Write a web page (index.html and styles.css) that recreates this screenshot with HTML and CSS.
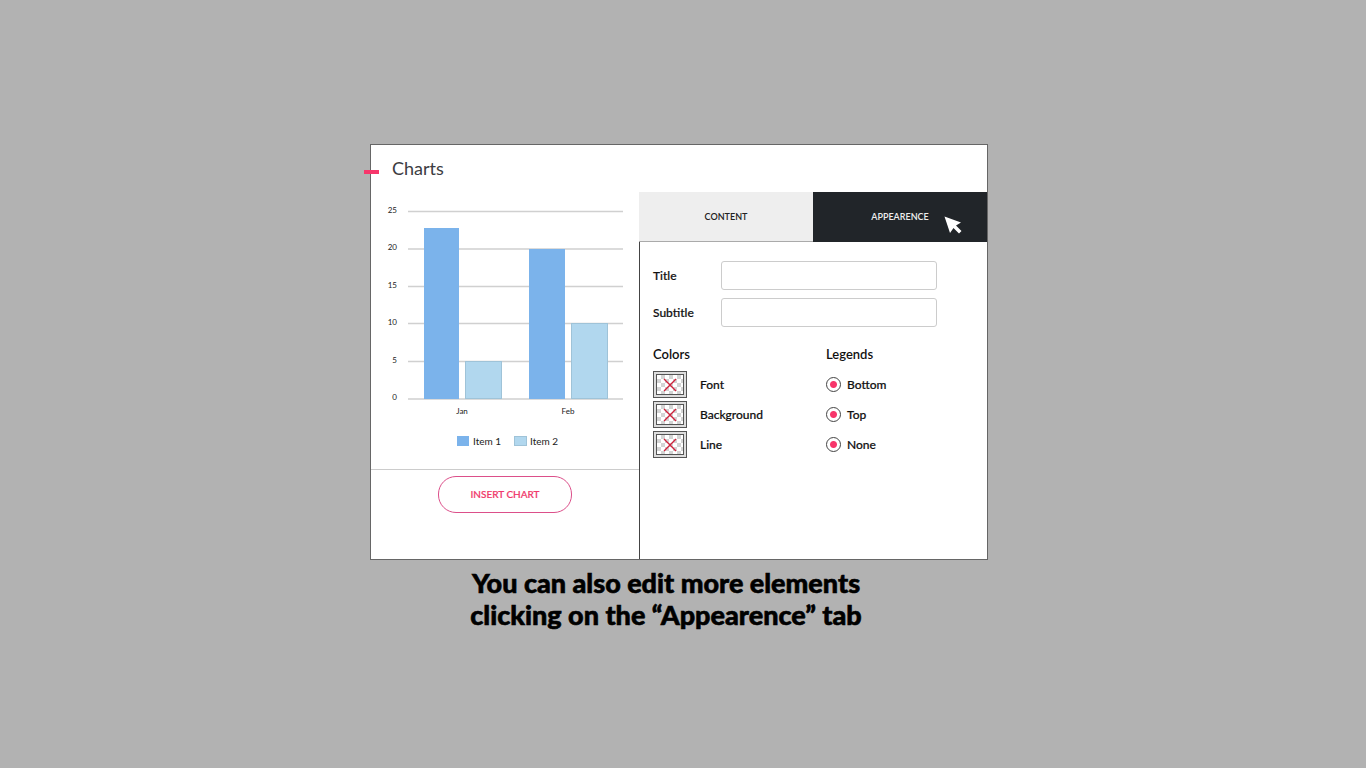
FILE: index.html
```
<!DOCTYPE html>
<html lang="en">

<head>
    <meta charset="UTF-8">
    <meta name="viewport" content="width=device-width, initial-scale=1.0">
    <title>Charts</title>
    <link rel="stylesheet" href="styles.css">
</head>

<body>
    <main class="page">
        <section class="dialog">
            <span class="marker"></span>
            <h1 class="dialog-title">Charts</h1>
            <div class="columns">
                <div class="preview">
                    <svg class="chart" viewBox="0 0 268 277" role="img" aria-label="Item 1 and Item 2 by month">
                        <g class="grid-lines">
                            <path d="M37 19.5H252M37 57H252M37 94.5H252M37 131.5H252M37 169.5H252M37 207H252" />
                        </g>
                        <g class="scale">
                            <text x="26" y="21">25</text>
                            <text x="26" y="58">20</text>
                            <text x="26" y="96">15</text>
                            <text x="26" y="133">10</text>
                            <text x="26" y="171">5</text>
                            <text x="26" y="208">0</text>
                        </g>
                        <g class="item1">
                            <rect x="53" y="36" width="35" height="171" />
                            <rect x="158" y="57" width="36" height="150" />
                            <rect x="86" y="244" width="12" height="10" />
                        </g>
                        <g class="item2">
                            <rect x="94.5" y="169.5" width="36" height="37" />
                            <rect x="200.5" y="131.5" width="36" height="75" />
                            <rect x="143.5" y="244.5" width="12" height="9" />
                        </g>
                        <g class="months">
                            <text x="91" y="222">Jan</text>
                            <text x="197" y="222">Feb</text>
                        </g>
                        <g class="legend">
                            <text x="102" y="253">Item 1</text>
                            <text x="159" y="253">Item 2</text>
                        </g>
                    </svg>
                    <div class="actions">
                        <button type="button" class="insert-btn">INSERT CHART</button>
                    </div>
                </div>
                <div class="settings">
                    <div class="tabs">
                        <button type="button" class="tab">CONTENT</button>
                        <button type="button" class="tab active">APPEARENCE
                            <svg class="cursor" viewBox="0 0 18 18" aria-hidden="true">
                                <path d="M0.5 0.5L17 6.5L12 9.5L17.5 15L15 17.5L9.5 12L6 17Z" />
                            </svg>
                        </button>
                    </div>
                    <form class="options" action="#">
                        <div class="field">
                            <label for="title">Title</label>
                            <input type="text" id="title" autocomplete="off">
                        </div>
                        <div class="field">
                            <label for="subtitle">Subtitle</label>
                            <input type="text" id="subtitle" autocomplete="off">
                        </div>
                        <div class="groups">
                            <div class="group">
                                <h2>Colors</h2>
                                <div class="row">
                                    <button type="button" class="swatch" id="font" aria-labelledby="font-label"><svg viewBox="0 0 14 14"><path d="M1 1L13 13M13 1L1 13" /></svg></button>
                                    <label for="font" id="font-label">Font</label>
                                </div>
                                <div class="row">
                                    <button type="button" class="swatch" id="background" aria-labelledby="background-label"><svg viewBox="0 0 14 14"><path d="M1 1L13 13M13 1L1 13" /></svg></button>
                                    <label for="background" id="background-label">Background</label>
                                </div>
                                <div class="row">
                                    <button type="button" class="swatch" id="line" aria-labelledby="line-label"><svg viewBox="0 0 14 14"><path d="M1 1L13 13M13 1L1 13" /></svg></button>
                                    <label for="line" id="line-label">Line</label>
                                </div>
                            </div>
                            <div class="group">
                                <h2>Legends</h2>
                                <div class="row radio-row">
                                    <input type="radio" name="legends" id="bottom" checked>
                                    <label for="bottom">Bottom</label>
                                </div>
                                <div class="row radio-row">
                                    <input type="radio" name="legends" id="top">
                                    <label for="top">Top</label>
                                </div>
                                <div class="row radio-row">
                                    <input type="radio" name="legends" id="none">
                                    <label for="none">None</label>
                                </div>
                            </div>
                        </div>
                    </form>
                </div>
            </div>
        </section>
        <p class="caption">You can also edit more elements<br>clicking on the “Appearence” tab</p>
    </main>
</body>

</html>
```
FILE: styles.css
```
* {
    margin: 0;
    padding: 0;
    box-sizing: border-box;
}

body {
    background: #b2b2b2;
    color: #111;
    font-family: Lato, "Liberation Sans", sans-serif;
}

button,
input {
    font-family: inherit;
}

.page {
    display: flex;
    flex-direction: column;
    align-items: center;
    padding: 144px 8px 40px 0;
}

.dialog {
    position: relative;
    width: 100%;
    max-width: 618px;
    background: #fff;
    border: 1px solid #666;
}

/* pink dash over the left edge */
.marker {
    position: absolute;
    left: -7px;
    top: 25px;
    width: 15px;
    height: 4px;
    background: #f7366b;
}

.dialog-title {
    padding: 0 21px;
    font-size: 18px;
    font-weight: 400;
    line-height: 47px;
    color: #3c3c42;
}

.columns {
    display: grid;
    grid-template-columns: 268fr 348fr;
}

.chart {
    display: block;
    width: 100%;
}

.grid-lines {
    stroke: #d0d0d0;
    stroke-width: 1.5;
}

.item1 {
    fill: #7bb3eb;
}

.item2 {
    fill: #b1d7ee;
    stroke: #9fc3d8;
}

.chart text {
    fill: #222;
    font-size: 8px;
}

.scale {
    text-anchor: end;
}

.months {
    text-anchor: middle;
}

.chart .legend text {
    font-size: 10px;
}

.actions {
    padding: 6px 0 46px;
    border-top: 1px solid #ccc;
    text-align: center;
}

.insert-btn {
    width: 134px;
    height: 37px;
    padding-bottom: 2px;
    background: #fff;
    border: 1px solid #dc4f8a;
    border-radius: 18px;
    color: #f0386b;
    font-size: 10px;
    font-weight: 500;
    -webkit-text-stroke: 0.2px;
}

.settings {
    display: flex;
    flex-direction: column;
}

.tabs {
    display: grid;
    grid-template-columns: 1fr 1fr;
}

.tab {
    position: relative;
    height: 50px;
    background: #eee;
    border: 0;
    border-bottom: 1px solid #aaa;
    color: #222;
    font-size: 9px;
    font-weight: 600;
}

.tab.active {
    background: #212529;
    border-bottom-color: #212529;
    color: #eee;
}

.cursor {
    position: absolute;
    right: 25px;
    top: 24px;
    width: 18px;
    height: 18px;
    fill: #fff;
}

.options {
    flex: 1;
    padding: 19px 50px 16px 13px;
    border-left: 1px solid #444;
}

.field {
    display: grid;
    grid-template-columns: 68px 1fr;
    align-items: center;
    margin-bottom: 8px;
    font-size: 12px;
    font-weight: 500;
    line-height: 14px;
}

.field input {
    width: 100%;
    height: 29px;
    padding: 0 8px;
    border: 1px solid #ccc;
    border-radius: 3px;
}

.field label,
.row label {
    -webkit-text-stroke: 0.2px;
}

.groups {
    display: grid;
    grid-template-columns: 173px 1fr;
    padding-top: 10px;
}

.group h2 {
    margin-bottom: 8px;
    font-size: 13px;
    font-weight: 600;
    line-height: 18px;
}

.row {
    display: flex;
    align-items: center;
    gap: 13px;
    height: 27px;
    margin-bottom: 3px;
    font-size: 12px;
    font-weight: 500;
}

.radio-row {
    gap: 6px;
}

.swatch {
    display: flex;
    align-items: center;
    justify-content: center;
    width: 34px;
    height: 27px;
    padding: 3px;
    border: 1px solid #555;
    outline: 1px solid #555;
    outline-offset: -4px;
    background: repeating-conic-gradient(#d4d4d4 0 25%, #fff 0 50%) content-box 0 0 / 8px 8px, #ddd;
}

.swatch svg {
    width: 14px;
    height: 14px;
    stroke: #d0203a;
    stroke-width: 1.3;
}

.row input {
    appearance: none;
    width: 15px;
    height: 15px;
    border: 1px solid #444;
    border-radius: 50%;
    background: radial-gradient(circle, #f7366b 3px, #fff 4px);
}

.caption {
    padding: 7px 26px 0 0;
    color: #000;
    font-family: "Lato Black", Lato, "Liberation Sans", sans-serif;
    font-size: 27px;
    font-weight: 900;
    line-height: 32px;
    text-align: center;
    -webkit-text-stroke: 0.6px;
}
```
